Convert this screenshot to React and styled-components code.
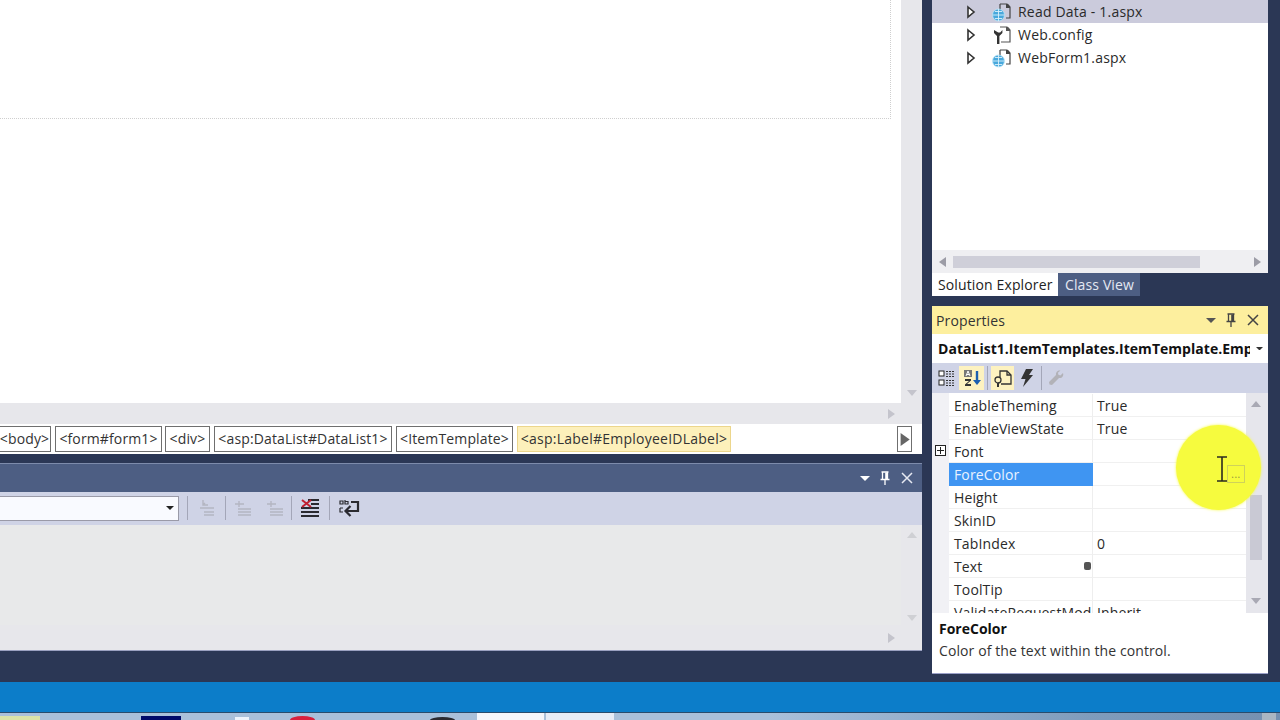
import React from "react";
import styled, { createGlobalStyle } from "styled-components";

const Global = createGlobalStyle`
  html, body { margin: 0; padding: 0; background: #2b3755; }
  * { box-sizing: border-box; }
`;

const Page = styled.div`
  width: 1280px; height: 720px; overflow: hidden; position: relative;
  display: flex; flex-direction: column; background: #2b3755;
  font-family: "Open Sans", "Liberation Sans", sans-serif; font-size: 14px; color: #2a2a2a;
  letter-spacing: 0.13px;
`;
const Main = styled.div`height: 682px; display: flex; align-items: flex-start; gap: 10px;`;
const LeftColumn = styled.div`width: 922px; height: 651px; display: flex; flex-direction: column;`;
const DesignRow = styled.div`height: 403px; display: flex;`;
const Canvas = styled.div`flex: 1; background: #fff;`;
const SelectionFrame = styled.div`
  width: 891px; height: 119px;
  border-right: 1px dotted #cfcfcf; border-bottom: 1px dotted #cfcfcf;
`;
const VBar = styled.div`
  width: 21px; background: #e7e7eb; display: flex; flex-direction: column;
  align-items: center; justify-content: ${p => p.$justify || "flex-end"}; padding: ${p => p.$pad || "7px 0 5px"};
`;
const HBar = styled.div`
  height: ${p => p.$h}px; background: #e7e7eb; display: flex; align-items: center;
  justify-content: flex-end; padding-right: ${p => p.$pr}px; flex: none;
`;
const Crumbs = styled.div`
  height: 30px; flex: none; background: #fff; display: flex; align-items: center;
  padding-right: 10px; overflow: hidden;
`;
const Tag = styled.div`
  height: 26px; width: ${p => p.$w}px; flex: none; margin-left: ${p => p.$ml}px; padding-bottom: 2px;
  border: 1px solid ${p => (p.$active ? "#ecd68c" : "#6f6f6f")};
  background: ${p => (p.$active ? "#fdf0bb" : "#fff")};
  display: flex; align-items: center; justify-content: center; white-space: nowrap;
  color: #333; letter-spacing: ${p => (p.$active ? "0.24px" : "0.13px")};
`;
const CrumbArrow = styled.div`
  width: 15px; height: 26px; margin-left: auto; border: 1px solid #6f6f6f;
  display: flex; align-items: center; justify-content: center;
`;
const DarkGap = styled.div`height: 9px; flex: none;`;
const Panel = styled.div`
  flex: 1; display: flex; flex-direction: column; border-top: 1px solid #7d8bab;
  border-bottom: 1px solid #9aa0c0; background: #e7e7eb;
`;
const PanelHead = styled.div`
  height: 28px; flex: none; background: #4d5e83; display: flex; align-items: center;
  justify-content: flex-end; padding-right: 7px; gap: 6px;
`;
const HeadButton = styled.div`
  width: 16px; height: 16px; display: flex; align-items: center; justify-content: center;
  margin-right: ${p => p.$mr || 0}px;
`;
const PanelBar = styled.div`
  height: 33px; flex: none; background: #cfd3e6; display: flex; align-items: center; padding-bottom: 1px;
`;
const Combo = styled.div`
  width: 179px; height: 25px; background: #f9faff; border: 1px solid #9a9aa8; border-left: 0;
  display: flex; align-items: center; justify-content: flex-end; padding-right: 4px; margin-right: 8px;
`;
const BarSep = styled.div`
  width: 1px; height: ${p => p.$h || 24}px; background: #a3a6b8; flex: none; margin: 0 ${p => p.$mx || 0}px;
`;
const BarIcon = styled.div`
  width: ${p => p.$w || 24}px; height: 24px; flex: none; display: flex; align-items: center; justify-content: center;
  background: ${p => (p.$on ? "#fdf2c0" : "transparent")};
`;
const PanelBody = styled.div`flex: 1; display: flex;`;
const PanelContent = styled.div`flex: 1; background: #e8e9ea;`;
const RightColumn = styled.div`width: 336px; height: 674px; display: flex; flex-direction: column;`;
const Tree = styled.div`height: 250px; flex: none; background: #fff;`;
const TreeRow = styled.div`
  height: 23px; display: flex; align-items: center; padding-left: 34px; letter-spacing: 0.2px;
  background: ${p => (p.$selected ? "#cbcbdc" : "transparent")};
`;
const TreeArrow = styled.div`width: 10px; display: flex; margin-right: 16px;`;
const TreeIcon = styled.div`width: 20px; height: 20px; margin-right: 6px; flex: none;`;
const TreeScroll = styled.div`
  height: 23px; flex: none; background: #efeff2; display: flex; align-items: center; padding: 0 6px;
`;
const Thumb = styled.div`width: 247px; height: 12px; background: #cfcfd9; margin: 0 auto 0 5px;`;
const Tabs = styled.div`height: 23px; flex: none; display: flex;`;
const Tab = styled.div`
  width: ${p => p.$w}px; height: 100%; padding-left: ${p => (p.$active ? 6 : 7)}px; display: flex; align-items: center;
  background: ${p => (p.$active ? "#fff" : "#4d5e83")};
  color: ${p => (p.$active ? "#222" : "#e4e8f2")};
`;
const TabGap = styled.div`height: 10px; flex: none;`;
const PropHead = styled.div`
  height: 28px; flex: none; background: #fdef9e; display: flex; align-items: center;
  padding: 0 7px 0 4px; gap: 6px; color: #333;
`;
const PropTitle = styled.div`margin-right: auto;`;
const ObjectRow = styled.div`
  height: 29px; flex: none; background: #fff; display: flex; align-items: center; padding: 0 4px 0 6px; gap: 6px;
`;
const ObjectName = styled.div`
  width: 312px; overflow: hidden; white-space: nowrap; font-weight: 700; color: #111; letter-spacing: 0.03px;
`;
const PropBar = styled.div`
  height: 30px; flex: none; background: #cfd3e6; display: flex; align-items: center; padding-left: 3px;
`;
const Grid = styled.div`height: 220px; flex: none; display: flex; background: #f1f1f5;`;
const Gutter = styled.div`width: 17px; flex: none; padding-top: 52px; padding-left: 3px;`;
const PlusBox = styled.div`
  width: 11px; height: 11px; border: 1px solid #222; position: relative; background: #fff;
  &::before { content: ""; position: absolute; left: 1px; right: 1px; top: 4px; height: 1px; background: #222; }
  &::after { content: ""; position: absolute; top: 1px; bottom: 1px; left: 4px; width: 1px; background: #222; }
`;
const Rows = styled.div`width: 297px; flex: none; background: #fff; overflow: hidden; padding-top: 1px;`;
const Row = styled.div`
  height: 23px; display: grid; grid-template-columns: 144px 153px; 
`;
const NameCell = styled.div`
  padding-left: 5px; display: flex; align-items: center; justify-content: space-between; white-space: nowrap;
  padding-right: 0; border-right: 1px solid ${p => (p.$selected ? "transparent" : "#eeeeee")};
  border-bottom: 1px solid ${p => (p.$selected ? "transparent" : "#f0f0f0")};
  background: ${p => (p.$selected ? "#3f95f2" : "transparent")};
  color: ${p => (p.$selected ? "#e9f2ff" : "#2a2a2a")};
`;
const ValueCell = styled.div`
  padding-left: 4px; display: flex; align-items: center; border-bottom: 1px solid #f0f0f0; color: #2a2a2a;
`;
const Marker = styled.span`
  width: 7px; height: 8px; background: #555; border-radius: 2px; display: block; flex: none; margin-right: 1px;
`;
const GridScroll = styled.div`
  width: 22px; flex: none; background: #e6e6ec; display: flex; flex-direction: column; align-items: center;
  padding: 6px 2px 7px 0;
`;
const GridThumb = styled.div`width: 12px; height: 65px; background: #c9c9d4; margin: 86px 0 auto;`;
const Description = styled.div`
  flex: 1; background: #fff; border-bottom: 1px solid #9aa0c8; padding: 6px 7px;
  color: #333;
`;
const DescTitle = styled.div`font-weight: 700; color: #111; line-height: 20px; letter-spacing: 0;`;
const DescText = styled.div`line-height: 20px; margin-top: 2px; letter-spacing: 0.1px;`;
const Status = styled.div`height: 30px; flex: none; background: #0c7dc9;`;
const Taskbar = styled.div`
  height: 8px; flex: none; border-top: 1px solid #2a4c6c; display: flex; align-items: flex-end; position: relative;
  background: linear-gradient(90deg, #a9c0da 0, #a9c0da 60%, #7f9cbc 85%, #7590b0 100%);
`;
const TaskItem = styled.div`
  width: ${p => p.$w}px; height: ${p => p.$h}px; margin-left: ${p => p.$ml}px; background: ${p => p.$c}; flex: none;
  border-radius: ${p => p.$r || "0"};
`;
const Highlight = styled.div`
  position: absolute; left: 1176px; top: 425px; width: 85px; height: 85px; border-radius: 50%;
  background: #f6fb3e; box-shadow: 0 0 3px #f6fb3e;
`;
const Ellipsis = styled.div`
  position: absolute; left: 1227px; top: 465px; width: 18px; height: 18px; border: 1px solid #cfd25a;
  font-size: 10px; line-height: 16px; text-align: center; color: #8c8f3e; letter-spacing: 0.5px;
`;
const Cursor = styled.svg`position: absolute; left: 1215px; top: 455px;`;

const Tri = ({ dir, s = 10, c = "#a9a9b4" }) => {
  const pts = { r: "2,0 9,5 2,10", l: "8,0 1,5 8,10", u: "0,8 5,2 10,8", d: "0,2 5,8 10,2" }[dir];
  return <svg width={s} height={s} viewBox="0 0 10 10" style={{ display: "block" }}><polygon points={pts} fill={c} /></svg>;
};
const Hollow = () => (
  <svg width="10" height="14" viewBox="0 0 10 14"><path d="M2 2 L8 7 L2 12 Z" fill="#fff" stroke="#333" strokeWidth="1.6" /></svg>
);
const Drop = ({ c, w = 10 }) => (
  <svg width={w} height={w / 2} viewBox="0 0 10 5" style={{ display: "block", flex: "none" }}><polygon points="0,0 10,0 5,5" fill={c} /></svg>
);
const Pin = ({ c }) => (
  <svg width="12" height="15" viewBox="0 0 12 15" fill="none" stroke={c} strokeWidth="1.3"><path d="M3.500 1v7M8.500 1v7M2.500 1h7M1.500 8.500h9M6 9v5" /><path d="M7.200 1.500v6.500" strokeWidth="2" /></svg>
);
const Close = ({ c }) => (
  <svg width="12" height="12" viewBox="0 0 12 12" stroke={c} strokeWidth="1.5"><path d="M1 1l10 10M11 1L1 11" /></svg>
);
const GlobeDoc = () => (
  <svg width="20" height="20" viewBox="0 0 20 20">
    <path d="M8 2h7l3 3v11h-4M8 2v6" fill="none" stroke="#444" strokeWidth="1.2" />
    <path d="M14 2h2l2 2.500V6h-4z" fill="#444" />
    <circle cx="6.500" cy="13" r="6" fill="#48a8dc" stroke="#bfe6f7" strokeWidth="0.8" />
    <path d="M1 13h11M6.500 7v12M3 9.500h7M3 16.500h7" stroke="#d9f0fb" strokeWidth="0.9" />
  </svg>
);
const ConfigDoc = () => (
  <svg width="20" height="20" viewBox="0 0 20 20">
    <path d="M8 2h7l3 3v12h-9" fill="none" stroke="#555" strokeWidth="1.2" />
    <path d="M14 2h2l2 2.500V6h-4z" fill="#555" />
    <path d="M2 5v3l3 3v8h2.400v-8l3-3V5L8.200 7.500h-2L2 5z" fill="#333" />
  </svg>
);
const Categorized = () => (
  <svg width="18" height="18" viewBox="0 0 18 18">
    <rect x="1" y="2" width="5" height="5" fill="#fff" stroke="#222" /><rect x="1" y="11" width="5" height="5" fill="#fff" stroke="#222" />
    <path d="M8 2.500h8M8 5h8M8 7.500h8M8 11.500h8M8 14h8M8 16.500h8" stroke="#333" strokeDasharray="2 1" />
  </svg>
);
const Alpha = () => (
  <svg width="20" height="20" viewBox="0 0 20 20">
    <rect x="2" y="2" width="8" height="7" fill="#777" /><path d="M4 8l2-5 2 5M4.800 6.500h2.400" fill="none" stroke="#fff" />
    <path d="M3 11h6v1.500L5 16h4v2H3v-1.500L7 13H3z" fill="#333" />
    <path d="M15 3v11" stroke="#1c5fb0" strokeWidth="2.400" /><path d="M11 12h8l-4 5z" fill="#1c5fb0" />
  </svg>
);
const PropPage = () => (
  <svg width="20" height="20" viewBox="0 0 20 20" fill="none" stroke="#333" strokeWidth="1.300">
    <path d="M7 9V3h7l4 4v9H8" /><path d="M14 3v4h4" />
    <circle cx="5" cy="12" r="3" /><path d="M5 15v4" strokeWidth="2" />
  </svg>
);
const Bolt = () => (
  <svg width="18" height="20" viewBox="0 0 18 20"><path d="M9 1h7l-4 6h4L6 19l2.500-8H4z" fill="#333" /></svg>
);
const Wrench = ({ c = "#b2b2b8" }) => (
  <svg width="16" height="16" viewBox="0 0 16 16"><path d="M15 3l-2.600 2.400-2-.6-.5-2L12.500 .6C10 .1 7.500 2 8 5L1 12l.5 2.500L4 15l7-7c3 .5 5-2 4-5z" fill={c} /></svg>
);
const Faded = ({ arrow }) => (
  <svg width="18" height="20" viewBox="0 0 18 20" stroke="#b4b6c2" strokeWidth="1.400" fill="none">
    {arrow === "down"
      ? <><path d="M5 2v5h5M5 7l2-2" /><path d="M2 10h14M6 14h10M6 17h10" /></>
      : <><path d="M1 6h9M5 3v6" /><path d="M4 11h13M4 14h13M4 17h13" /></>}
  </svg>
);
const Wrap = () => (
  <svg width="22" height="20" viewBox="0 0 22 20">
    <path d="M8 2h11M11 6h8M1 10h18M1 14h18M1 18h18" stroke="#2a2a30" strokeWidth="2" />
    <path d="M2 2l9 7M11 2L2 9" stroke="#c02030" strokeWidth="2" />
  </svg>
);
const AbcEnter = () => (
  <svg width="22" height="20" viewBox="0 0 22 20" fill="none" stroke="#2a2a30">
    <path d="M13 4h7v9H8" strokeWidth="2.200" /><path d="M12.500 8l-5 5 5 5" strokeWidth="2.200" />
    <path d="M2 3h3v3H2zM7 2v4h3V3.500H7M2 10h3M2 10v4h3" strokeWidth="1.200" />
  </svg>
);

const props = [
  ["EnableTheming", "True"], ["EnableViewState", "True"], ["Font", ""], ["ForeColor", "", true],
  ["Height", ""], ["SkinID", ""], ["TabIndex", "0"], ["Text", "", false, true], ["ToolTip", ""], ["ValidateRequestMod", "Inherit"],
];
const tags = [
  ["<body>", 53, -2], ["<form#form1>", 107, 4], ["<div>", 45, 3], ["<asp:DataList#DataList1>", 178, 4],
  ["<ItemTemplate>", 117, 4], ["<asp:Label#EmployeeIDLabel>", 214, 4, true],
];

export default function App() {
  return (
    <Page>
      <Global />
      <Main>
        <LeftColumn>
          <DesignRow>
            <Canvas><SelectionFrame /></Canvas>
            <VBar><Tri dir="d" c="#c4c4cc" /></VBar>
          </DesignRow>
          <HBar $h={21} $pr={26}><Tri dir="r" c="#c4c4cc" /></HBar>
          <Crumbs>
            {tags.map(([t, w, ml, a]) => <Tag key={t} $w={w} $ml={ml} $active={a}>{t}</Tag>)}
            <CrumbArrow><Tri dir="r" s={13} c="#666" /></CrumbArrow>
          </Crumbs>
          <DarkGap />
          <Panel>
            <PanelHead>
              <HeadButton $mr={-2}><Drop c="#fff" /></HeadButton>
              <HeadButton><Pin c="#fff" /></HeadButton>
              <HeadButton><Close c="#e6e9f2" /></HeadButton>
            </PanelHead>
            <PanelBar>
              <Combo><Drop c="#222" w={8} /></Combo>
              <BarSep />
              <BarIcon $w={37}><Faded arrow="down" /></BarIcon>
              <BarSep />
              <BarIcon $w={33}><Faded /></BarIcon>
              <BarIcon $w={32}><Faded /></BarIcon>
              <BarSep />
              <BarIcon $w={37}><Wrap /></BarIcon>
              <BarSep />
              <BarIcon $w={38}><AbcEnter /></BarIcon>
            </PanelBar>
            <PanelBody>
              <PanelContent />
              <VBar $justify="space-between" $pad="5px 0 2px"><Tri dir="u" c="#cfd0d4" /><Tri dir="d" c="#cfd0d4" /></VBar>
            </PanelBody>
            <HBar $h={25} $pr={26}><Tri dir="r" c="#c4c4cc" /></HBar>
          </Panel>
        </LeftColumn>
        <RightColumn>
          <Tree>
            <TreeRow $selected><TreeArrow><Hollow /></TreeArrow><TreeIcon><GlobeDoc /></TreeIcon>Read Data - 1.aspx</TreeRow>
            <TreeRow><TreeArrow><Hollow /></TreeArrow><TreeIcon><ConfigDoc /></TreeIcon>Web.config</TreeRow>
            <TreeRow><TreeArrow><Hollow /></TreeArrow><TreeIcon><GlobeDoc /></TreeIcon>WebForm1.aspx</TreeRow>
          </Tree>
          <TreeScroll><Tri dir="l" c="#9c9ca6" /><Thumb /><Tri dir="r" c="#9c9ca6" /></TreeScroll>
          <Tabs><Tab $active $w={126}>Solution Explorer</Tab><Tab $w={82}>Class View</Tab></Tabs>
          <TabGap />
          <PropHead>
            <PropTitle>Properties</PropTitle>
            <HeadButton $mr={-2}><Drop c="#555" /></HeadButton>
            <HeadButton><Pin c="#444" /></HeadButton>
            <HeadButton><Close c="#444" /></HeadButton>
          </PropHead>
          <ObjectRow>
            <ObjectName>DataList1.ItemTemplates.ItemTemplate.EmployeeIDLabel</ObjectName>
            <Drop c="#333" w={7} />
          </ObjectRow>
          <PropBar>
            <BarIcon><Categorized /></BarIcon>
            <BarIcon $w={25} $on><Alpha /></BarIcon>
            <BarSep $mx={3} />
            <BarIcon $w={23} $on><PropPage /></BarIcon>
            <BarIcon><Bolt /></BarIcon>
            <BarSep $mx={3} />
            <BarIcon $w={22}><Wrench /></BarIcon>
          </PropBar>
          <Grid>
            <Gutter><PlusBox /></Gutter>
            <Rows>
              {props.map(([n, v, sel, mark]) => (
                <Row key={n}>
                  <NameCell $selected={sel}>{n}{mark && <Marker />}</NameCell>
                  <ValueCell>{v}</ValueCell>
                </Row>
              ))}
            </Rows>
            <GridScroll>
              <Tri dir="u" />
              <GridThumb />
              <Tri dir="d" />
            </GridScroll>
          </Grid>
          <Description>
            <DescTitle>ForeColor</DescTitle>
            <DescText>Color of the text within the control.</DescText>
          </Description>
        </RightColumn>
      </Main>
      <Status />
      <Taskbar>
        <TaskItem $w={40} $h={4} $ml={0} $c="#d9e3a8" />
        <TaskItem $w={40} $h={4} $ml={101} $c="#000a6a" />
        <TaskItem $w={14} $h={3} $ml={54} $c="#eef4fb" />
        <TaskItem $w={25} $h={4} $ml={41} $c="#d8203c" $r="50% 50% 0 0 / 100% 100% 0 0" />
        <TaskItem $w={25} $h={3} $ml={115} $c="#2a2a30" $r="50% 50% 0 0 / 100% 100% 0 0" />
        <TaskItem $w={67} $h={7} $ml={22} $c="#f4f6fb" />
        <TaskItem $w={68} $h={7} $ml={2} $c="#e6ecf6" />
        <TaskItem $w={14} $h={7} $ml={648} $c="#aab6c2" />
      </Taskbar>
      <Highlight />
      <Ellipsis>...</Ellipsis>
      <Cursor width="14" height="28" viewBox="0 0 14 28" fill="none" stroke="#2b2b20" strokeWidth="1.600">
        <path d="M2 2h10M2 26h10M7 2v24" />
      </Cursor>
    </Page>
  );
}
